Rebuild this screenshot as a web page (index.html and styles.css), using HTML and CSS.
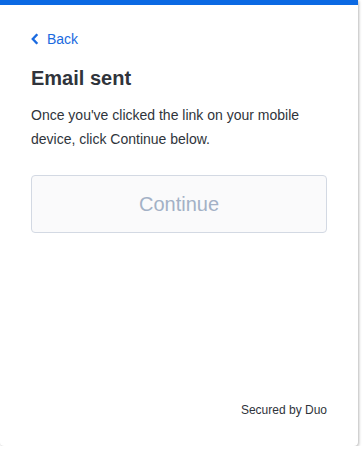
FILE: index.html
```html
<!DOCTYPE html>
<html lang="en">
<head>
<meta charset="utf-8">
<link rel="stylesheet" href="styles.css">
</head>
<body>
<main class="card">
  <a class="back" href="#">
    <svg class="chev" width="8" height="12" viewBox="0 0 8 12"><path d="M6.3 1.2 L1.8 6 L6.3 10.8" fill="none" stroke="currentColor" stroke-width="2.4"/></svg>
    <span>Back</span>
  </a>
  <h1 class="title">Email sent</h1>
  <p class="text">Once you've clicked the link on your mobile device, click Continue below.</p>
  <button class="btn" type="button">Continue</button>
  <footer class="footer">Secured by Duo</footer>
</main>
</body>
</html>
```
FILE: styles.css
```css
html, body { margin: 0; padding: 0; background: #fff; }
body { font-family: "Liberation Sans", Arial, sans-serif; }
.card {
  box-sizing: border-box;
  width: 358px;
  height: 446px;
  border-top: 5px solid #0b69e3;
  border-radius: 0 0 4px 4px;
  box-shadow: 1px 1px 3px rgba(0,0,0,0.28);
  padding: 24px 31px 0 31px;
  display: flex;
  flex-direction: column;
  background: #fff;
}
.back {
  display: flex;
  align-items: center;
  gap: 8px;
  color: #1a6ae0;
  text-decoration: none;
  font-size: 14px;
  line-height: 20px;
  height: 20px;
}
.chev { display: block; }
.title {
  margin: 17px 0 0 0;
  font-size: 20px;
  line-height: 24px;
  font-weight: bold;
  color: #30343b;
}
.text {
  margin: 13px 0 0 0;
  font-size: 14px;
  line-height: 24px;
  color: #2f343b;
}
.btn {
  margin-top: 24px;
  height: 58px;
  width: 296px;
  border: 1px solid #d3d9e3;
  border-radius: 4px;
  background: #fafafb;
  color: #a3b1c6;
  font-family: "Liberation Sans", Arial, sans-serif;
  font-size: 20px;
  padding: 0;
}
.footer {
  margin-top: auto;
  margin-bottom: 28px;
  text-align: right;
  font-size: 12px;
  line-height: 16px;
  color: #2f343b;
}
```
